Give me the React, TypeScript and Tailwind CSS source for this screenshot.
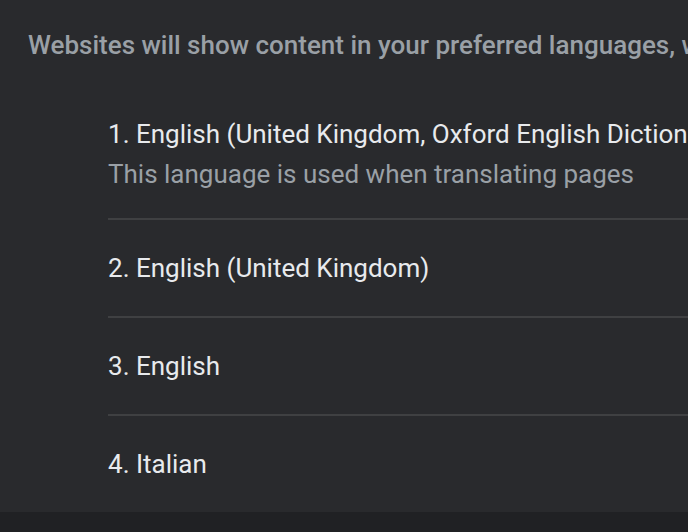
const LANGUAGES = [
  { name: 'English (United Kingdom, Oxford English Dictionary spelling)', note: 'This language is used when translating pages' },
  { name: 'English (United Kingdom)' },
  { name: 'English' },
  { name: 'Italian' },
];

export default function App() {
  return (
    <div className="h-[532px] w-[688px] overflow-hidden bg-[#202124] font-['Roboto',sans-serif]">
      <div className="h-[512px] overflow-hidden bg-[#292a2d]">
        {/* Kopfzeile */}
        <p className="whitespace-nowrap pl-[28px] pt-[27px] text-[26px] font-medium leading-[36px] text-[#9aa0a6]">
          Websites will show content in your preferred languages, when possible
        </p>

        {/* Sprachliste */}
        <ul className="mt-[27px] pl-[108px]">
          {LANGUAGES.map((lang, i) => (
            <li
              key={lang.name}
              className={`flex flex-col justify-center whitespace-nowrap ${lang.note ? 'h-[128px]' : 'h-[98px]'} ${
                i > 0 ? 'border-t-2 border-[#3f4042]' : ''
              }`}
            >
              <span className="text-[26px] leading-[40px] text-[#e8eaed]">
                {i + 1}. {lang.name}
              </span>
              {lang.note && <span className="text-[26px] leading-[40px] text-[#9aa0a6]">{lang.note}</span>}
            </li>
          ))}
        </ul>
      </div>
    </div>
  );
}
